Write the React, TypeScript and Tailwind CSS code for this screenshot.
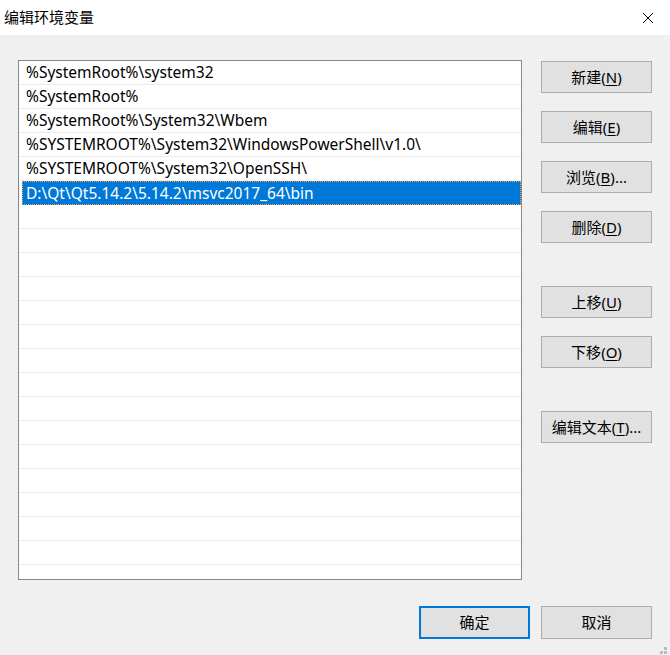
import React from 'react';

const paths = [
    '%SystemRoot%\\system32',
    '%SystemRoot%',
    '%SystemRoot%\\System32\\Wbem',
    '%SYSTEMROOT%\\System32\\WindowsPowerShell\\v1.0\\',
    '%SYSTEMROOT%\\System32\\OpenSSH\\',
    'D:\\Qt\\Qt5.14.2\\5.14.2\\msvc2017_64\\bin',
];

const SELECTED = 5;
const TOTAL_ROWS = 22;

const Btn = ({ label, hot, tail = '', className = '' }: { label: string; hot: string; tail?: string; className?: string }) => (
    <button className={`w-[111px] h-[32px] bg-[#e1e1e1] border border-[#adadad] text-[15px] text-black flex items-center justify-center ${className}`}>
        {label}(<span className="underline underline-offset-2">{hot}</span>){tail}
    </button>
);

const App = () => {
    const rows = Array.from({ length: TOTAL_ROWS }, (_, i) => paths[i] ?? '');

    return (
        <div
            className="w-[670px] h-[655px] bg-[#f0f0f0] flex flex-col relative overflow-hidden"
            style={{ fontFamily: '"Noto Sans", "Noto Sans CJK SC", sans-serif' }}
        >
            {/* Title bar */}
            <div className="h-[35px] bg-white flex items-center justify-between pl-[4px] pr-[16px] shrink-0">
                <span className="text-[15px] text-black leading-none">编辑环境变量</span>
                <svg width="12" height="12" viewBox="0 0 12 12">
                    <path d="M1 1L11 11M11 1L1 11" stroke="#000" strokeWidth="1" />
                </svg>
            </div>

            {/* Content */}
            <div className="flex pt-[25px] pl-[18px]">
                {/* List box */}
                <div className="w-[504px] h-[520px] bg-white border border-[#828790] overflow-hidden">
                    {rows.map((text, i) =>
                        i === SELECTED ? (
                            <div key={i} className="h-[24px] ml-[3px] bg-[#0078d7] border border-dotted border-[#ff9a40] text-white text-[15.5px] flex items-center pl-[3px] pt-[1px] whitespace-nowrap">
                                {text}
                            </div>
                        ) : (
                            <div key={i} className="h-[24px] border-b border-[#ececec] ml-[1px] text-[15.5px] text-black flex items-center pl-[6px] pt-[1px] whitespace-nowrap">
                                {text}
                            </div>
                        )
                    )}
                </div>

                {/* Side buttons */}
                <div className="ml-[19px] pt-[1px] flex flex-col">
                    <Btn label="新建" hot="N" />
                    <Btn label="编辑" hot="E" className="mt-[18px]" />
                    <Btn label="浏览" hot="B" tail="..." className="mt-[18px]" />
                    <Btn label="删除" hot="D" className="mt-[18px]" />
                    <Btn label="上移" hot="U" className="mt-[43px]" />
                    <Btn label="下移" hot="O" className="mt-[18px]" />
                    <Btn label="编辑文本" hot="T" tail="..." className="mt-[43px]" />
                </div>
            </div>

            {/* Footer buttons */}
            <div className="flex justify-end gap-[11px] pr-[18px] mt-[26px]">
                <button className="w-[111px] h-[33px] bg-[#e1e1e1] border-2 border-[#0078d7] text-[15px] text-black">确定</button>
                <button className="w-[111px] h-[33px] bg-[#e1e1e1] border border-[#adadad] text-[15px] text-black">取消</button>
            </div>

            {/* Resize grip */}
            <div className="absolute right-[3px] bottom-[1px] grid grid-cols-2 gap-[1px]">
                <span className="w-[3px] h-[3px]" />
                <span className="w-[3px] h-[3px] bg-[#bcbcbc]" />
                <span className="w-[3px] h-[3px] bg-[#bcbcbc]" />
                <span className="w-[3px] h-[3px] bg-[#bcbcbc]" />
            </div>
        </div>
    );
};

export default App;
